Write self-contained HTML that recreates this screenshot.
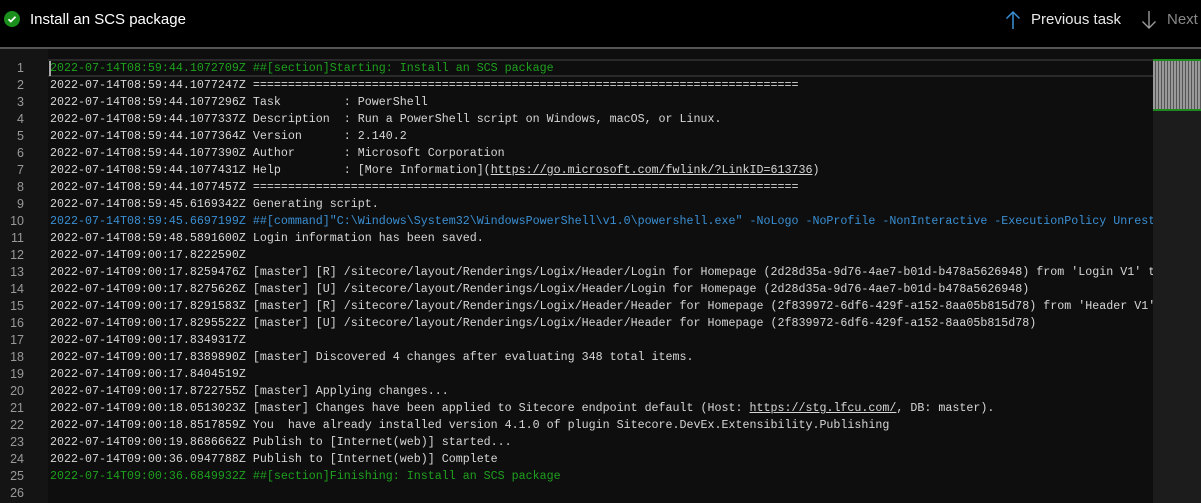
<!DOCTYPE html>
<html><head><meta charset="utf-8"><style>
*{margin:0;padding:0;box-sizing:border-box}
body{width:1201px;height:503px;background:#0e0e0e;overflow:hidden;position:relative;font-family:"Liberation Sans",sans-serif}
.hdr{position:absolute;left:0;top:0;width:1201px;height:47px;background:#000}
.title{position:absolute;left:30px;top:11px;color:#fff;font-size:15px}
.chk{position:absolute;left:4px;top:11px;width:16px;height:16px;border-radius:50%;background:#1b8f1b}
.sep{position:absolute;left:0;top:47px;width:1201px;height:2px;background:#555}
.nav{position:absolute;top:11px;font-size:15px;color:#e8e8e8}
.gut{position:absolute;left:0;top:49px;width:48px;height:454px;background:#141414}
.code{position:absolute;left:0;top:60px;width:1153px;height:443px;overflow:hidden;font-family:"Liberation Mono",monospace;font-size:11.67px;color:#d6d6d6}
.l{position:absolute;left:0;height:17px;line-height:17px;white-space:pre;width:1153px}
.n{position:absolute;left:0;width:24px;text-align:right;color:#999;font-family:"Liberation Sans",sans-serif;font-size:12.5px}
.t{position:absolute;left:50px}
.g{color:#1ea01e}.b{color:#3a8fd3}
u{text-decoration:underline}
.hl{position:absolute;left:48px;top:59px;width:1105px;height:18px;border-top:2px solid #2a2a2a;border-bottom:2px solid #2a2a2a}
.cur{position:absolute;left:49px;top:61px;width:2px;height:15px;background:#aaa}
.mm{position:absolute;left:1153px;top:59px;width:48px;height:52px;background:repeating-linear-gradient(90deg,#999 0 2px,#555 2px 3px);border-top:2px solid #1e8a1e;border-bottom:2px solid #1e8a1e}
.mm2{position:absolute;left:1153px;top:111px;width:48px;height:392px;background:#1c1c1c}
</style></head><body>
<div class="hdr"></div>
<div class="chk"><svg width="16" height="16" viewBox="0 0 16 16"><path d="M4.5 8.2l2.3 2.3 4.7-4.8" stroke="#fff" stroke-width="1.8" fill="none"/></svg></div>
<div class="title">Install an SCS package</div>
<svg style="position:absolute;left:1005px;top:10px" width="16" height="20" viewBox="0 0 16 20"><path d="M8 19V2M1.5 8.5L8 2l6.5 6.5" stroke="#3a8fd3" stroke-width="1.5" fill="none"/></svg>
<div class="nav" style="left:1031px">Previous task</div>
<svg style="position:absolute;left:1141px;top:10px" width="16" height="20" viewBox="0 0 16 20"><path d="M8 1v17M1.5 11.5L8 18l6.5-6.5" stroke="#999" stroke-width="1.4" fill="none"/></svg>
<div class="nav" style="left:1167px;color:#888">Next</div>
<div class="sep"></div>
<div class="gut"></div>
<div class="hl"></div>
<div class="code">
<div class="l" style="top:0"><span class="n">1</span><span class="t g">2022-07-14T08:59:44.1072709Z ##[section]Starting: Install an SCS package</span></div>
<div class="l" style="top:17px"><span class="n">2</span><span class="t">2022-07-14T08:59:44.1077247Z ==============================================================================</span></div>
<div class="l" style="top:34px"><span class="n">3</span><span class="t">2022-07-14T08:59:44.1077296Z Task         : PowerShell</span></div>
<div class="l" style="top:51px"><span class="n">4</span><span class="t">2022-07-14T08:59:44.1077337Z Description  : Run a PowerShell script on Windows, macOS, or Linux.</span></div>
<div class="l" style="top:68px"><span class="n">5</span><span class="t">2022-07-14T08:59:44.1077364Z Version      : 2.140.2</span></div>
<div class="l" style="top:85px"><span class="n">6</span><span class="t">2022-07-14T08:59:44.1077390Z Author       : Microsoft Corporation</span></div>
<div class="l" style="top:102px"><span class="n">7</span><span class="t">2022-07-14T08:59:44.1077431Z Help         : [More Information](<u>https://go.microsoft.com/fwlink/?LinkID=613736</u>)</span></div>
<div class="l" style="top:119px"><span class="n">8</span><span class="t">2022-07-14T08:59:44.1077457Z ==============================================================================</span></div>
<div class="l" style="top:136px"><span class="n">9</span><span class="t">2022-07-14T08:59:45.6169342Z Generating script.</span></div>
<div class="l" style="top:153px"><span class="n">10</span><span class="t b">2022-07-14T08:59:45.6697199Z ##[command]"C:\Windows\System32\WindowsPowerShell\v1.0\powershell.exe" -NoLogo -NoProfile -NonInteractive -ExecutionPolicy Unrestricted</span></div>
<div class="l" style="top:170px"><span class="n">11</span><span class="t">2022-07-14T08:59:48.5891600Z Login information has been saved.</span></div>
<div class="l" style="top:187px"><span class="n">12</span><span class="t">2022-07-14T09:00:17.8222590Z</span></div>
<div class="l" style="top:204px"><span class="n">13</span><span class="t">2022-07-14T09:00:17.8259476Z [master] [R] /sitecore/layout/Renderings/Logix/Header/Login for Homepage (2d28d35a-9d76-4ae7-b01d-b478a5626948) from 'Login V1' to</span></div>
<div class="l" style="top:221px"><span class="n">14</span><span class="t">2022-07-14T09:00:17.8275626Z [master] [U] /sitecore/layout/Renderings/Logix/Header/Login for Homepage (2d28d35a-9d76-4ae7-b01d-b478a5626948)</span></div>
<div class="l" style="top:238px"><span class="n">15</span><span class="t">2022-07-14T09:00:17.8291583Z [master] [R] /sitecore/layout/Renderings/Logix/Header/Header for Homepage (2f839972-6df6-429f-a152-8aa05b815d78) from 'Header V1'</span></div>
<div class="l" style="top:255px"><span class="n">16</span><span class="t">2022-07-14T09:00:17.8295522Z [master] [U] /sitecore/layout/Renderings/Logix/Header/Header for Homepage (2f839972-6df6-429f-a152-8aa05b815d78)</span></div>
<div class="l" style="top:272px"><span class="n">17</span><span class="t">2022-07-14T09:00:17.8349317Z</span></div>
<div class="l" style="top:289px"><span class="n">18</span><span class="t">2022-07-14T09:00:17.8389890Z [master] Discovered 4 changes after evaluating 348 total items.</span></div>
<div class="l" style="top:306px"><span class="n">19</span><span class="t">2022-07-14T09:00:17.8404519Z</span></div>
<div class="l" style="top:323px"><span class="n">20</span><span class="t">2022-07-14T09:00:17.8722755Z [master] Applying changes...</span></div>
<div class="l" style="top:340px"><span class="n">21</span><span class="t">2022-07-14T09:00:18.0513023Z [master] Changes have been applied to Sitecore endpoint default (Host: <u>https://stg.lfcu.com/</u>, DB: master).</span></div>
<div class="l" style="top:357px"><span class="n">22</span><span class="t">2022-07-14T09:00:18.8517859Z You  have already installed version 4.1.0 of plugin Sitecore.DevEx.Extensibility.Publishing</span></div>
<div class="l" style="top:374px"><span class="n">23</span><span class="t">2022-07-14T09:00:19.8686662Z Publish to [Internet(web)] started...</span></div>
<div class="l" style="top:391px"><span class="n">24</span><span class="t">2022-07-14T09:00:36.0947788Z Publish to [Internet(web)] Complete</span></div>
<div class="l" style="top:408px"><span class="n">25</span><span class="t g">2022-07-14T09:00:36.6849932Z ##[section]Finishing: Install an SCS package</span></div>
<div class="l" style="top:425px"><span class="n">26</span><span class="t"></span></div>
</div>
<div class="cur"></div>
<div class="mm"></div>
<div class="mm2"></div>
</body></html>
